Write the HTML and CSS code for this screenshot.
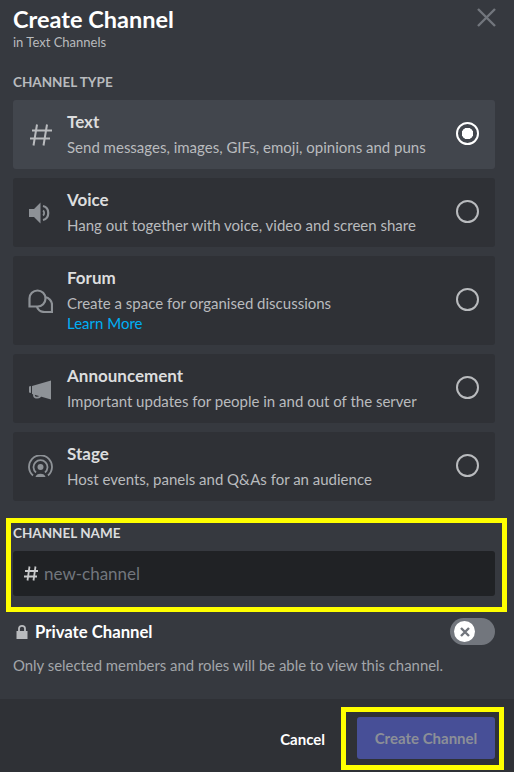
FILE: index.html
```html
<!DOCTYPE html>
<html>

<head>
  <meta charset="utf-8">
  <title>Create Channel</title>
  <link rel="stylesheet" href="styles.css">
</head>

<body>
  <div class="modal">
    <div class="header">
      <div>
        <h1>Create Channel</h1>
        <div class="subtitle">in Text Channels</div>
      </div>
      <svg class="close" width="24" height="24" viewBox="0 0 24 24">
        <path d="M4 4L21 21M21 4L4 21" stroke="#72767d" stroke-width="2.4" fill="none" />
      </svg>
    </div>

    <h2 class="label">CHANNEL TYPE</h2>
    <div class="types">
      <div class="type selected">
        <svg class="icon" width="25" height="24" viewBox="0 0 25 24">
          <path d="M9 1.500L5.500 22.500M19 1.500L15.500 22.500M4 7.500H24M2 15.500H22" stroke="#b9bbbe" stroke-width="2" fill="none" />
        </svg>
        <div class="info">
          <div class="name">Text</div>
          <div class="desc">Send messages, images, GIFs, emoji, opinions and puns</div>
        </div>
        <div class="radio on"></div>
      </div>
      <div class="type">
        <svg class="icon" width="25" height="24" viewBox="0 0 25 24">
          <path d="M1 8H6L12.500 1.500V22.500L6 16H1Z" fill="#8e9297" />
          <path d="M15 9.500C16.500 10.500 16.500 13.500 15 14.500" stroke="#8e9297" stroke-width="1.800" fill="none" />
          <path d="M15 5C22 6.500 22 17.500 15 19" stroke="#8e9297" stroke-width="2.200" fill="none" />
        </svg>
        <div class="info">
          <div class="name">Voice</div>
          <div class="desc">Hang out together with voice, video and screen share</div>
        </div>
        <div class="radio"></div>
      </div>
      <div class="type">
        <svg class="icon" width="25" height="24" viewBox="0 0 25 24">
          <path d="M1.500 17.500V9.500A8 8 0 1 1 9.500 17.500Z" stroke="#8e9297" stroke-width="2.200" fill="none" />
          <path d="M17 8C21 8.500 24 12 24 16V23H16.500C12.500 23 9.500 20.500 9 17.500" stroke="#8e9297" stroke-width="2.200" fill="none" />
        </svg>
        <div class="info">
          <div class="name">Forum</div>
          <div class="desc">Create a space for organised discussions</div>
          <a class="more">Learn More</a>
        </div>
        <div class="radio"></div>
      </div>
      <div class="type">
        <svg class="icon" width="25" height="24" viewBox="0 0 25 24">
          <path d="M1 9.500L3 9V16L1 15.500ZM4 9L23 3.500V22.500L4 17Z" fill="#8e9297" />
          <path d="M6 17V18.500C6 21.500 12.500 21.500 12.500 18" stroke="#8e9297" stroke-width="1.800" fill="none" />
        </svg>
        <div class="info">
          <div class="name">Announcement</div>
          <div class="desc">Important updates for people in and out of the server</div>
        </div>
        <div class="radio"></div>
      </div>
      <div class="type">
        <svg class="icon" width="25" height="24" viewBox="0 0 25 24">
          <path d="M5 20.500A11.500 11.500 0 1 1 20 20.500M8 17.500A7 7 0 1 1 17 17.500" stroke="#8e9297" stroke-width="1.800" fill="none" />
          <circle cx="12.500" cy="12" r="3" fill="#8e9297" />
          <path d="M7.500 22C8 17.500 17 17.500 17.500 22Z" fill="#8e9297" />
        </svg>
        <div class="info">
          <div class="name">Stage</div>
          <div class="desc">Host events, panels and Q&amp;As for an audience</div>
        </div>
        <div class="radio"></div>
      </div>
    </div>

    <div class="name-box">
      <h2 class="label">CHANNEL NAME</h2>
      <div class="input">
        <svg class="hash" width="14" height="15" viewBox="0 0 14 15">
          <path d="M5.500 0.500L3.500 14.500M11.500 0.500L9.500 14.500M1 5H14M0 10.500H13" stroke="#c8c9cb" stroke-width="1.800" fill="none" />
        </svg>
        <span class="placeholder">new-channel</span>
      </div>
    </div>

    <div class="private">
      <svg width="16" height="16" viewBox="0 0 16 16">
        <path d="M2.500 7H13.500V15H2.500Z" fill="#b9bbbe" />
        <path d="M5 7V4.500C5 1 11 1 11 4.500V7" stroke="#b9bbbe" stroke-width="1.800" fill="none" />
      </svg>
      <span class="private-name">Private Channel</span>
      <div class="toggle">
        <div class="knob">
          <svg width="12" height="12" viewBox="0 0 12 12">
            <path d="M2 2L10 10M10 2L2 10" stroke="#72767d" stroke-width="2.400" fill="none" />
          </svg>
        </div>
      </div>
    </div>
    <p class="note">Only selected members and roles will be able to view this channel.</p>

    <div class="footer">
      <a class="cancel">Cancel</a>
      <div class="create-box">
        <div class="create">Create Channel</div>
      </div>
    </div>
  </div>
</body>

</html>
```

FILE: styles.css
```css
* {
  box-sizing: border-box;
}

body {
  margin: 0;
  background: #36393f;
  font-family: Lato, sans-serif;
}

.modal {
  width: 514px;
  height: 772px;
  display: flex;
  flex-direction: column;
  overflow: hidden;
}

.header {
  display: flex;
  justify-content: space-between;
  padding: 5px 16px 0 13px;
  height: 74px;
}

h1 {
  margin: 0;
  font-size: 23.500px;
  line-height: 28px;
  font-weight: 700;
  color: #fff;
}

.subtitle {
  font-size: 13px;
  line-height: 18px;
  color: #b9bbbe;
}

.label {
  margin: 0 0 9px 13px;
  font-size: 13.500px;
  line-height: 17px;
  font-weight: 700;
  color: #b9bbbe;
}

.types {
  display: flex;
  flex-direction: column;
  gap: 9px;
  margin: 0 19px 0 13px;
}

.type {
  display: flex;
  align-items: center;
  min-height: 69px;
  padding: 12px 16px 12px 15px;
  background: #2f3136;
  border-radius: 3px;
}

.type.selected {
  background: #42464d;
}

.icon {
  flex: none;
  margin-right: 14px;
}

.info {
  flex: 1;
}

.name {
  margin-bottom: 5px;
  font-size: 17px;
  line-height: 20px;
  font-weight: 700;
  color: #dcddde;
}

.desc, .more {
  font-size: 15px;
  line-height: 20px;
  color: #b9bbbe;
}

.more {
  display: block;
  color: #00aff4;
}

.radio {
  flex: none;
  width: 23px;
  height: 23px;
  margin-bottom: 2px;
  border: 2px solid #b9bbbe;
  border-radius: 50%;
}

.radio.on {
  border-color: #fff;
  background: radial-gradient(circle, #fff 5.500px, transparent 6px);
}

.name-box {
  margin: 17px 7px 0 6px;
  height: 94px;
  padding: 2px 7px 0 2px;
  border: 5px solid #ff0;
}

.name-box .label {
  margin: 0 0 9px;
  color: #dcddde;
}

.input {
  display: flex;
  align-items: center;
  height: 45px;
  padding: 0 11px;
  background: #202225;
  border-radius: 3px;
}

.hash {
  flex: none;
  margin-right: 6px;
}

.placeholder {
  font-size: 17px;
  color: #72767d;
}

.private {
  display: flex;
  align-items: center;
  height: 27px;
  margin: 6px 19px 0 14px;
}

.private-name {
  flex: 1;
  margin-left: 5px;
  font-size: 16.700px;
  font-weight: 700;
  color: #fff;
}

.toggle {
  width: 45px;
  height: 27px;
  padding: 3px 4px;
  background: #72767d;
  border-radius: 14px;
}

.knob {
  width: 21px;
  height: 21px;
  display: flex;
  align-items: center;
  justify-content: center;
  background: #fff;
  border-radius: 50%;
}

.note {
  margin: 10px 19px 0 13px;
  font-size: 14.900px;
  line-height: 20px;
  color: #a3a6aa;
}

.footer {
  display: flex;
  align-items: center;
  justify-content: flex-end;
  margin-top: auto;
  height: 73px;
  padding: 8px 10px 2px 0;
  background: #2f3136;
}

.cancel {
  margin-right: 16px;
  font-size: 15px;
  font-weight: 700;
  color: #fff;
}

.create-box {
  border: 5px solid #ff0;
  padding: 5px 4px 6px 11px;
}

.create {
  width: 138px;
  height: 42px;
  display: flex;
  align-items: center;
  justify-content: center;
  background: #474f97;
  border-radius: 3px;
  font-size: 15px;
  font-weight: 700;
  color: #8c8f97;
}
```
